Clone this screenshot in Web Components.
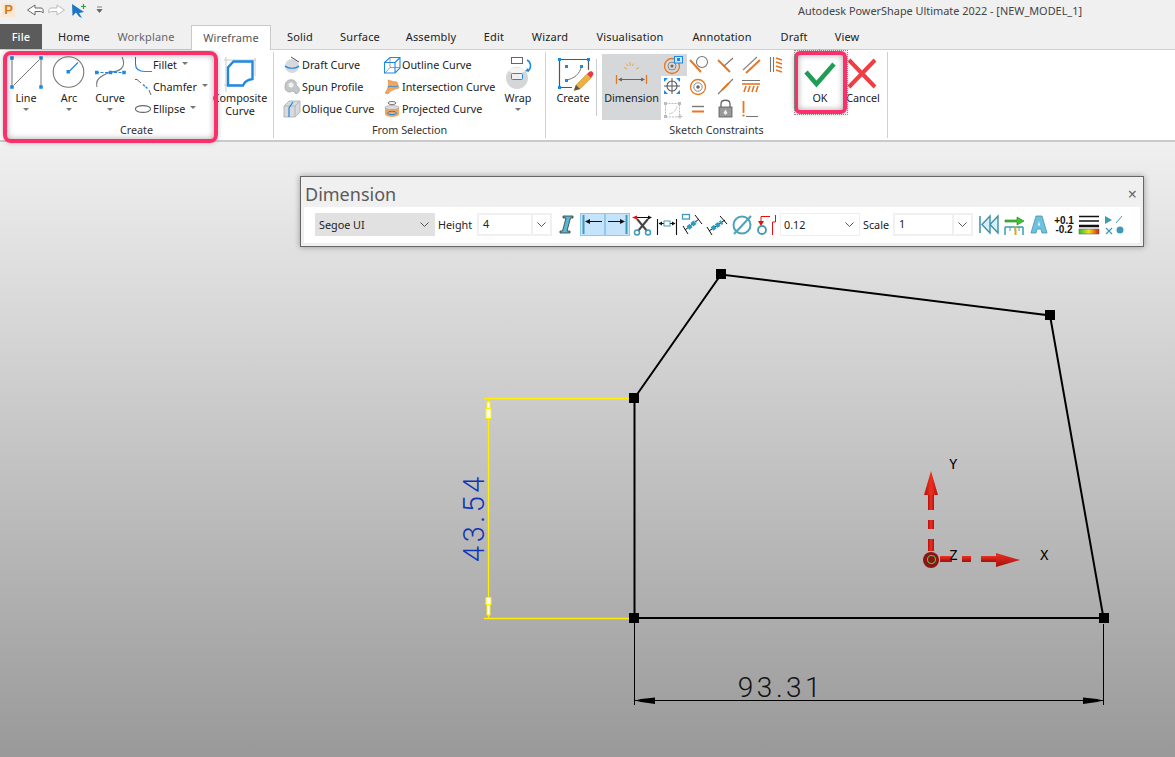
<!DOCTYPE html>
<html>
<head>
<meta charset="utf-8">
<title>PowerShape</title>
<style>
  html, body { margin: 0; padding: 0; overflow: hidden; }
  body { font-family: "Noto Sans", "Open Sans", sans-serif; font-size: 10.8px; color: #222; }
  svg { display: block; overflow: visible; }
</style>
</head>
<body>

<ps-app>
  <ps-titlebar title-text="Autodesk PowerShape Ultimate 2022 - [NEW_MODEL_1]"></ps-titlebar>
  <ps-tabs></ps-tabs>

  <ps-ribbon>
    <rb-group label="Create" width="274" pad="6">
      <rb-big label="Line" width="40" caret>
        <svg width="40" height="37" viewBox="6 54 40 37" fill="none">
          <path d="M12 58V87M41 58V87" stroke="#777" stroke-width="1"/>
          <path d="M14 85L39 60" stroke="#777" stroke-width="1"/>
          <path d="M10.250 56.250h3.500v3.500h-3.500zM39.250 56.250h3.500v3.500h-3.500zM10.250 85.250h3.500v3.500h-3.500zM39.250 85.250h3.500v3.500h-3.500z" fill="#1e88e5"/>
        </svg>
      </rb-big>
      <rb-big label="Arc" width="40" caret style="margin-left:3px">
        <svg width="40" height="37" viewBox="49 54 40 37" fill="none">
          <circle cx="68.500" cy="72" r="15.300" stroke="#777" stroke-width="1.100"/>
          <path d="M69 71.500L78 62.500" stroke="#1e88e5" stroke-width="1.200"/>
          <rect x="66.500" y="70" width="3.500" height="3.500" fill="#1e88e5"/>
        </svg>
      </rb-big>
      <rb-big label="Curve" width="40" caret style="margin-left:1px">
        <svg width="40" height="37" viewBox="90 54 40 37" fill="none">
          <path d="M97 87C95 79 101 76 110 72C120 72 127 67 122 57" stroke="#777" stroke-width="1.100"/>
          <path d="M96 72.500H124" stroke="#1e88e5" stroke-width="1" stroke-dasharray="3 1.500"/>
          <path d="M95 70.750h3.500v3.500h-3.500zM108.750 70.750h3.500v3.500h-3.500zM122.250 70.750h3.500v3.500h-3.500z" fill="#1e88e5"/>
        </svg>
      </rb-big>
      <rb-small-col width="79" style="margin-left:3px">
        <rb-small label="Fillet" caret>
          <svg width="18" height="18" viewBox="134 56 18 18" fill="none">
            <path d="M135.500 57V64" stroke="#666"/>
            <path d="M135.500 64C135.500 69 139 71.500 145 71.500" stroke="#1e88e5" stroke-width="1.200"/>
            <path d="M145 71.500H152" stroke="#777"/>
          </svg>
        </rb-small>
        <rb-small label="Chamfer" caret>
          <svg width="18" height="18" viewBox="134 78 18 18" fill="none">
            <path d="M135 79.500H137L141 83" stroke="#666"/>
            <path d="M143 84.500L148 89" stroke="#1e88e5" stroke-width="1.400" stroke-dasharray="2.500 1"/>
            <path d="M149 90L151 95" stroke="#666"/>
          </svg>
        </rb-small>
        <rb-small label="Ellipse" caret>
          <svg width="18" height="18" viewBox="134 100 18 18" fill="none">
            <ellipse cx="143" cy="109" rx="7.600" ry="3.400" stroke="#666" stroke-width="1.100"/>
          </svg>
        </rb-small>
      </rb-small-col>
      <rb-big label="Composite Curve" width="56">
        <svg width="56" height="37" viewBox="212 54 56 37" fill="none">
          <path d="M226 57V92M224 60H256M255 58V76M224 85H240" stroke="#ccc" stroke-width="1"/>
          <path d="M233.500 61.500H252.500V79C247 80 244 82 243 85.500H228V67.500Z" stroke="#1e88e5" stroke-width="2.400"/>
        </svg>
      </rb-big>
    </rb-group>

    <rb-group label="From Selection" width="272" pad="8">
      <rb-small-col width="100">
        <rb-small label="Draft Curve">
          <svg width="18" height="18" viewBox="282 56 18 18" fill="none">
            <circle cx="291" cy="66" r="7" fill="#d6d9db"/>
            <path d="M290 57L298 62" stroke="#555"/>
            <path d="M284 66C287 69 295 69 298 66" stroke="#1e88e5" stroke-width="1.200"/>
          </svg>
        </rb-small>
        <rb-small label="Spun Profile">
          <svg width="18" height="18" viewBox="282 78 18 18" fill="none">
            <path d="M284 87C284 81 288 79 292 80C295 81 296 84 295 85L298 88C299 90 298 93 295 94L292 91C288 93 284 92 284 87Z" fill="#c3c7ca" stroke="#a5a9ac" stroke-width=".8"/>
            <circle cx="290" cy="85" r="2.500" fill="#f2f2f2"/>
          </svg>
        </rb-small>
        <rb-small label="Oblique Curve">
          <svg width="18" height="18" viewBox="282 100 18 18" fill="none">
            <path d="M283 106L288 101H299V112L294 117H283Z" fill="#d8dadc" stroke="#a8abae" stroke-width=".8"/>
            <path d="M283 106H294V117M294 106L299 101" stroke="#a8abae" stroke-width=".8"/>
            <path d="M288 117V108L292 102" stroke="#1e88e5" stroke-width="1.200"/>
          </svg>
        </rb-small>
      </rb-small-col>
      <rb-small-col width="116">
        <rb-small label="Outline Curve">
          <svg width="18" height="18" viewBox="382 56 18 18" fill="none">
            <path d="M383.500 62.500L389 57.500H399V68L394 73H383.500ZM383.500 62.500H394V73M394 62.500L399 57.500" stroke="#1e88e5" stroke-width="1.100"/>
            <path d="M389 57.500V67.500H399M389 67.500L384 73" stroke="#777" stroke-width=".7"/>
          </svg>
        </rb-small>
        <rb-small label="Intersection Curve">
          <svg width="18" height="18" viewBox="382 78 18 18" fill="none">
            <path d="M387 80C391 81 393 82 396 82L398 88C394 89 390 90 387 94L384 93C387 89 388 85 387 80Z" fill="#f0a560" stroke="#d98a42" stroke-width=".6"/>
            <path d="M387 87C390 85 393 88 397 86" stroke="#1e88e5" stroke-width=".9"/>
          </svg>
        </rb-small>
        <rb-small label="Projected Curve">
          <svg width="18" height="18" viewBox="382 100 18 18" fill="none">
            <ellipse cx="391" cy="103" rx="4" ry="1.500" stroke="#666" stroke-width=".9"/>
            <path d="M384 107.500V114C384 118 398 118 398 114V107.500Z" fill="#f0a560"/>
            <ellipse cx="391" cy="107.500" rx="7" ry="2" fill="#ddd" stroke="#999" stroke-width=".6"/>
            <ellipse cx="391" cy="113" rx="4.500" ry="1.700" stroke="#1e88e5" stroke-width="1"/>
          </svg>
        </rb-small>
      </rb-small-col>
      <rb-big label="Wrap" width="40" caret>
        <svg width="40" height="37" viewBox="498 54 40 37" fill="none">
          <rect x="511.500" y="57.500" width="11" height="6" stroke="#666"/>
          <circle cx="517" cy="78" r="11" fill="#d4d6d8"/>
          <ellipse cx="517" cy="70.500" rx="8" ry="3" fill="#f5f5f5"/>
          <rect x="511.500" y="73.500" width="11" height="6" rx="1" fill="#eee" stroke="#1e88e5"/>
          <path d="M527 60C531 62 532 68 528 71" stroke="#1e88e5" stroke-width="1.500"/>
          <path d="M529 72L525 71L528 68Z" fill="#1e88e5"/>
        </svg>
      </rb-big>
    </rb-group>

    <rb-group label="Sketch Constraints" width="342" pad="7">
      <rb-big label="Create" width="40">
        <svg width="40" height="37" viewBox="553 54 40 37" fill="none">
          <path d="M559.500 59.500H588.500V70M559.500 59.500V87.500H572" stroke="#555" stroke-width="1.200"/>
          <path d="M566 80C574 79 580 74 581.500 66" stroke="#777"/>
          <path d="M558 58h3v3h-3zM587 58h3v3h-3zM558 86h3v3h-3zM565 65h3v3h-3zM565 79h3v3h-3zM580 65h3v3h-3z" fill="#1e88e5"/>
          <path d="M576 85L587 74L591 78L580 89L574 90.500Z" fill="#f0b040" stroke="#b8862c" stroke-width=".5"/>
          <path d="M587 74L589 72C590 71 592 71 593 72.500C594 74 593 75 592.500 76L591 78Z" fill="#e83b3b"/>
          <path d="M576 85L580 89L574 90.500Z" fill="#555"/>
        </svg>
      </rb-big>
      <rb-vsep></rb-vsep>
      <rb-big label="Dimension" width="59" active>
        <svg width="59" height="37" viewBox="602 54 59 37" fill="none">
          <path d="M624 67.500L627 69M636 69L639 67.500M630 66V62M626 63.500L628 66M634 63.500L632 66" stroke="#eba33f" stroke-width="1"/>
          <path d="M616.500 75V84M646.500 75V84" stroke="#e87722" stroke-width="1.300"/>
          <path d="M619 79.500H644" stroke="#666"/>
          <path d="M618 79.500L622 77.500V81.500ZM645 79.500L641 77.500V81.500Z" fill="#666"/>
        </svg>
      </rb-big>
      <rb-icon-grid>
        <svg width="26" height="22" viewBox="661 54 26 22" fill="none" style="background:#d6d7d9">
          <circle cx="672" cy="66" r="7.500" stroke="#e87722" stroke-width="1.300"/>
          <circle cx="672" cy="66" r="4" stroke="#8a8a8a"/>
          <circle cx="672" cy="66" r="1.500" fill="#666"/>
          <rect x="674.500" y="56.500" width="8" height="6.500" fill="#cfe4f7" stroke="#1e88e5"/>
          <rect x="677" y="58" width="3" height="3" fill="#1e88e5"/>
        </svg>
        <svg width="25" height="22" viewBox="687 54 25 22" fill="none">
          <circle cx="702" cy="62" r="5.500" stroke="#777" stroke-width="1.100"/>
          <path d="M690 60L701 72" stroke="#e87722" stroke-width="2"/>
        </svg>
        <svg width="27" height="22" viewBox="712 54 27 22" fill="none">
          <path d="M718 60L730 72" stroke="#e87722" stroke-width="2"/>
          <path d="M724 66L733 58" stroke="#777" stroke-width="1.200"/>
        </svg>
        <svg width="25" height="22" viewBox="739 54 25 22" fill="none">
          <path d="M743 70L757 57" stroke="#888" stroke-width="1.200"/>
          <path d="M746 73L760 60" stroke="#e87722" stroke-width="2"/>
        </svg>
        <svg width="25" height="22" viewBox="764 54 25 22" fill="none">
          <path d="M770.500 57V72M773.500 57V72" stroke="#777" stroke-width="1.100"/>
          <path d="M776 58L782 60M776 62L782 64M776 66L782 68M776 70L782 72" stroke="#e87722" stroke-width="1.600"/>
        </svg>

        <svg width="26" height="22" viewBox="661 76 26 22" fill="none">
          <circle cx="672" cy="86" r="5" stroke="#555" stroke-width="1.100"/>
          <path d="M664 86H680M672 78V94" stroke="#555"/>
          <path d="M664 78h4l-4 4zM680 78h-4l4 4zM664 94h4l-4-4zM680 94h-4l4-4z" fill="#1e88e5"/>
        </svg>
        <svg width="25" height="22" viewBox="687 76 25 22" fill="none">
          <circle cx="698" cy="87" r="7.500" stroke="#e87722" stroke-width="1.300"/>
          <circle cx="698" cy="87" r="4.200" stroke="#8a8a8a"/>
          <circle cx="698" cy="87" r="1.800" fill="#666"/>
        </svg>
        <svg width="27" height="22" viewBox="712 76 27 22" fill="none">
          <path d="M718 94L733 79" stroke="#777" stroke-width="1.100"/>
          <path d="M722 90L729 83" stroke="#e87722" stroke-width="2"/>
        </svg>
        <svg width="25" height="22" viewBox="739 76 25 22" fill="none">
          <path d="M742 80.500H760" stroke="#777"/>
          <path d="M742 84H760" stroke="#e87722" stroke-width="1.600"/>
          <path d="M744 92L746 86M748 92L750 86M752 92L754 86M756 92L758 86" stroke="#e87722" stroke-width="1.600"/>
        </svg>
        <span></span>

        <svg width="26" height="22" viewBox="661 98 26 22" fill="none">
          <path d="M665.500 103.500H679.500V117H665.500Z" stroke="#bbb" stroke-dasharray="2 1"/>
          <path d="M669 114C674 113 676 110 677 106" stroke="#ccc"/>
          <path d="M664 102h3v3h-3zM678 102h3v3h-3zM664 115h3v3h-3z" fill="#bbb"/>
          <path d="M680 114V119M677.500 116.500H682.500" stroke="#bbb"/>
        </svg>
        <svg width="25" height="22" viewBox="687 98 25 22" fill="none">
          <path d="M692 106.500H704" stroke="#777" stroke-width="1.400"/>
          <path d="M692 111.500H704" stroke="#e87722" stroke-width="2"/>
        </svg>
        <svg width="27" height="22" viewBox="712 98 27 22" fill="none">
          <path d="M721 107V104C721 99 730 99 730 104V107" stroke="#666" stroke-width="1.300"/>
          <rect x="719" y="107" width="13" height="10" fill="#999" stroke="#555" stroke-width=".8"/>
          <path d="M725.500 109.500L723.500 113L725.500 115L727.500 113Z" fill="#eee"/>
        </svg>
        <svg width="25" height="22" viewBox="739 98 25 22" fill="none">
          <path d="M743.500 101V113" stroke="#e87722" stroke-width="1.800"/>
          <rect x="742.500" y="114.500" width="2" height="2" fill="#e87722"/>
          <path d="M746 116.500H758" stroke="#777" stroke-width="1.100"/>
        </svg>
        <span></span>
      </rb-icon-grid>
      <rb-big label="OK" width="46" style="margin-left:8px">
        <svg width="46" height="37" viewBox="797 54 46 37" fill="none">
          <path d="M806 72L816.500 84L834 64" stroke="#1f9d55" stroke-width="4.500"/>
        </svg>
      </rb-big>
      <rb-big label="Cancel" width="40">
        <svg width="40" height="37" viewBox="843 54 40 37" fill="none">
          <path d="M849 60L875 87M875 60L849 87" stroke="#ee3f45" stroke-width="4"/>
        </svg>
      </rb-big>
    </rb-group>
  </ps-ribbon>

  <ps-viewport>
    <ps-dialog heading="Dimension">
      <dim-combo value="Segoe UI" width="120" filled style="margin-left:11px"></dim-combo>
      <dim-label text="Height" width="39" style="margin-left:3px"></dim-label>
      <dim-input value="4" width="75"></dim-input>
      <svg width="20" height="23" viewBox="557 213 20 23" fill="none" style="margin-left:5px">
        <path d="M563 216H573V218H570.500L567 231H570V233H560V231H562.500L566 218H563Z" fill="#56b8d2" stroke="#333" stroke-width=".8"/>
      </svg>
      <dim-toggle style="margin-left:3px">
        <svg width="23" height="21" viewBox="581 214 23 21" fill="none">
          <path d="M583.500 215V234" stroke="#3f9bb5" stroke-width="2"/>
          <path d="M587 221.500H602" stroke="#111"/>
          <path d="M585 221.500L590 219V224Z" fill="#111"/>
        </svg>
      </dim-toggle>
      <dim-toggle>
        <svg width="23" height="21" viewBox="606 214 23 21" fill="none">
          <path d="M626.500 215V234" stroke="#3f9bb5" stroke-width="2"/>
          <path d="M608 221.500H623" stroke="#111"/>
          <path d="M625 221.500L620 219V224Z" fill="#111"/>
        </svg>
      </dim-toggle>
      <svg width="24" height="23" viewBox="631 213 24 23" fill="none" style="margin-left:1px">
        <path d="M633 217.500H651" stroke="#111"/>
        <path d="M632 217.500L637 215.500V219.500Z" fill="#e01010"/>
        <path d="M652 217.500L648 215.500V219.500Z" fill="#111"/>
        <path d="M637 219L647 231M648 219L638 231" stroke="#444" stroke-width="2"/>
        <circle cx="637" cy="232.500" r="2.500" stroke="#3f9bb5" stroke-width="1.500"/>
        <circle cx="648" cy="232.500" r="2.500" stroke="#3f9bb5" stroke-width="1.500"/>
      </svg>
      <svg width="22" height="23" viewBox="656 213 22 23" fill="none" style="margin-left:1px">
        <path d="M657.500 219V235M676.500 219V235" stroke="#111" stroke-width="1.100"/>
        <path d="M659 223.500H675" stroke="#111"/>
        <path d="M658.500 223.500L662 221.500V225.500ZM675.500 223.500L672 221.500V225.500Z" fill="#111"/>
        <rect x="664" y="221" width="6" height="5" fill="#fff" stroke="#3f9bb5"/>
      </svg>
      <svg width="23" height="23" viewBox="681 213 23 23" fill="none" style="margin-left:3px">
        <path d="M683 226L688 234M695 215L702 224" stroke="#111"/>
        <path d="M685 230L699 219" stroke="#111"/>
        <rect x="682.500" y="214.500" width="7" height="4.500" fill="#fff" stroke="#3f9bb5" stroke-width="1.300"/>
        <path d="M688 228L696 221.500" stroke="#2a9cc0" stroke-width="4.500" stroke-dasharray="4 1"/>
      </svg>
      <svg width="24" height="23" viewBox="705 213 24 23" fill="none" style="margin-left:1px">
        <path d="M707 227L712 235M720 216L727 224" stroke="#111"/>
        <path d="M709 231L725 220" stroke="#111"/>
        <path d="M712 229L722 222" stroke="#2a9cc0" stroke-width="4.500" stroke-dasharray="4 1"/>
      </svg>
      <svg width="22" height="23" viewBox="731 213 22 23" fill="none" style="margin-left:2px">
        <circle cx="742" cy="225" r="8.500" stroke="#4da3bb" stroke-width="2"/>
        <path d="M734 234L751 216" stroke="#4da3bb" stroke-width="2"/>
      </svg>
      <svg width="23" height="23" viewBox="755 213 23 23" fill="none" style="margin-left:2px">
        <path d="M761 223V216.500H770" stroke="#e01010"/>
        <path d="M761 226L758 221H764Z" fill="#e01010"/>
        <path d="M775.500 215V222H772.500V235" stroke="#e01010"/>
        <circle cx="762" cy="230" r="4" stroke="#3f9bb5" stroke-width="1.800"/>
      </svg>
      <dim-combo value="0.12" width="80" style="margin-left:2px"></dim-combo>
      <dim-label text="Scale" width="30" style="margin-left:3px"></dim-label>
      <dim-input value="1" width="80"></dim-input>
      <svg width="24" height="23" viewBox="977 213 24 23" fill="none" style="margin-left:4px">
        <path d="M980 216V233" stroke="#3b8fa8" stroke-width="1.500"/>
        <path d="M990 216L982 224.500L990 233ZM998 216L990 224.500L998 233Z" fill="#d6eef5" stroke="#3b8fa8" stroke-width="1.400"/>
      </svg>
      <svg width="24" height="23" viewBox="1002 213 24 23" fill="none" style="margin-left:1px">
        <path d="M1005 227H1023M1005 227V235M1023 227V235" stroke="#3b9bb5" stroke-width="1.500"/>
        <path d="M1010 227V231M1015 227V231M1019 227V231" stroke="#3b9bb5"/>
        <path d="M1015.500 226V235" stroke="#e0a820" stroke-width="2"/>
        <path d="M1005 220H1017V217L1024 221L1017 225V222H1005Z" fill="#3fc62e" stroke="#1f7a14" stroke-width=".6"/>
      </svg>
      <svg width="20" height="23" viewBox="1029 213 20 23" fill="none" style="margin-left:3px">
        <path d="M1036 216H1042L1047 233H1042L1041 229H1037L1036 233H1031Z" fill="#6cc3e0" stroke="#4a90aa" stroke-width=".8"/>
        <path d="M1038 225.500H1040L1039 221Z" fill="#fff"/>
      </svg>
      <dim-tol style="margin-left:3px"></dim-tol>
      <svg width="23" height="23" viewBox="1078 213 23 23" fill="none" style="margin-left:2px">
        <path d="M1079 216.500H1099M1079 221H1099" stroke="#111" stroke-width="1.500"/>
        <path d="M1079 226H1099" stroke="#111" stroke-width="2.500"/>
        <defs><linearGradient id="heat"><stop offset="0" stop-color="#30c030"/><stop offset=".5" stop-color="#f0e020"/><stop offset="1" stop-color="#e02010"/></linearGradient></defs>
        <rect x="1079" y="229" width="20" height="5" fill="url(#heat)" stroke="#555" stroke-width=".5"/>
      </svg>
      <svg width="22" height="23" viewBox="1103 213 22 23" fill="none" style="margin-left:2px">
        <path d="M1105 216L1112 220L1105 224Z" fill="#3f9bb5"/>
        <path d="M1116 223L1122 216" stroke="#3f9bb5"/>
        <path d="M1106 228L1112 234M1112 228L1106 234" stroke="#3f9bb5" stroke-width="1.200"/>
        <circle cx="1120" cy="230" r="3.500" fill="#3f9bb5"/>
      </svg>
    </ps-dialog>
  </ps-viewport>

  <ps-mark left="3" top="51" width="215" height="92" radius="8"></ps-mark>
  <ps-mark left="794" top="51" width="53" height="63" radius="6" dotted></ps-mark>
</ps-app>

<script>
// Pequeno ayudante: crea el shadow root abierto y mete el html
function shadow(el, html) {
  const root = el.attachShadow({ mode: "open" });
  const template = document.createElement("template");
  template.innerHTML = html;
  root.appendChild(template.content.cloneNode(true));
  return root;
}

const TABS = [
  ["Home", 74, "#222"], ["Workplane", 146, "#666"], ["Wireframe", 231, "#555"], ["Solid", 300, "#222"],
  ["Surface", 360, "#222"], ["Assembly", 431, "#222"], ["Edit", 494, "#222"], ["Wizard", 550, "#222"],
  ["Visualisation", 630, "#222"], ["Annotation", 722, "#222"], ["Draft", 794, "#222"], ["View", 847, "#222"],
];

class PsApp extends HTMLElement {
  connectedCallback() {
    shadow(this, `<style>
      :host { display: flex; flex-direction: column; position: relative; width: 1175px; height: 757px; overflow: hidden; background: #f0f0f0; }
    </style><slot></slot>`);
  }
}

class PsTitlebar extends HTMLElement {
  connectedCallback() {
    shadow(this, `<style>
      :host { display: flex; align-items: center; height: 24px; flex: none; background: #f0f0f0; }
      .quick { display: flex; align-items: center; width: 798px; height: 24px; }
      .logo { width: 13px; height: 14px; margin: 0 0 4px 2px; background: #fbe7d2; color: #d87a1c; font: bold 13px/14px "Liberation Sans", sans-serif; text-align: center; }
      .title { font-size: 10.9px; color: #444; margin-top: -3px; white-space: nowrap; }
      svg { display: block; overflow: visible; }
    </style>
    <div class="quick">
      <div class="logo">P</div>
      <svg width="70" height="18" viewBox="26 0 70 18" fill="none" style="margin:0 0 4px 11px">
        <path d="M27.500 9L35 4V7H41C43 7 43.500 9 43 12C42 10.500 41 10.500 39 10.500H35V14Z" stroke="#666" fill="#fff"/>
        <path d="M64.500 9L57 4V7H51C49 7 48.500 9 49 12C50 10.500 51 10.500 53 10.500H57V14Z" stroke="#bbb" fill="#fff"/>
        <path d="M72 3L84 11L79 12L82 17L79 15.500L76 11.500L72.500 15Z" fill="#1976c8"/>
        <path d="M83.500 3V8M81 5.500H86" stroke="#2aa040" stroke-width="1.200"/>
      </svg>
      <svg width="8" height="8" viewBox="0 0 8 8" style="margin:0 0 4px 0">
        <path d="M1 1H6M1 3.500L3.500 6.500L6 3.500Z" fill="#666" stroke="#666" stroke-width=".8"/>
      </svg>
    </div>
    <div class="title">${this.getAttribute("title-text")}</div>`);
  }
}

class PsTabs extends HTMLElement {
  connectedCallback() {
    // cada pestana va centrada en su columna; los anchos salen de los centros
    let x = 42;
    let cells = "";
    TABS.forEach(([name, center, color], i) => {
      const next = TABS[i + 1] ? TABS[i + 1][1] : center + 40;
      const right = name === "Wireframe" ? 271 : name === "Workplane" ? 191 : name === "Solid" ? 330 : (center + next) / 2;
      const left = x;
      const w = right - left;
      const pad = (center - left) * 2 - w;
      cells += `<div class="tab ${name === "Wireframe" ? "on" : ""}" style="width:${w}px;color:${color};padding-left:${Math.max(pad, 0)}px;padding-right:${Math.max(-pad, 0)}px">${name}</div>`;
      x = right;
    });
    shadow(this, `<style>
      :host { display: flex; height: 25px; flex: none; background: #f0f0f0; font-size: 11px; letter-spacing: .15px; position: relative; z-index: 1; }
      .file { width: 42px; height: 25px; background: #5b5b5b; color: #fff; font-weight: 500; text-align: center; line-height: 25px; }
      .tab { box-sizing: border-box; height: 25px; line-height: 26px; text-align: center; white-space: nowrap; }
      .on { margin-top: 1px; line-height: 24px; background: #fff; border: 1px solid #c9c9c9; border-bottom: none; }
    </style><div class="file">File</div>${cells}`);
  }
}

class PsRibbon extends HTMLElement {
  connectedCallback() {
    shadow(this, `<style>
      :host { display: flex; height: 93px; flex: none; box-sizing: border-box; background: #fff; border-top: 1px solid #d0d0d0; border-bottom: 2px solid #cacaca; padding: 2px 0 0; }
    </style><slot></slot>`);
  }
}

class RbGroup extends HTMLElement {
  connectedCallback() {
    shadow(this, `<style>
      :host { display: flex; flex-direction: column; box-sizing: border-box; height: 86px; padding-top: 2px; border-right: 1px solid #d0d0d0; flex: none;
        width: ${this.getAttribute("width")}px; }
      .body { display: flex; height: 69px; padding-left: ${this.getAttribute("pad")}px; }
      .label { height: 14px; line-height: 14px; text-align: center; color: #333; }
    </style><div class="body"><slot></slot></div><div class="label">${this.getAttribute("label")}</div>`);
  }
}

class RbBig extends HTMLElement {
  connectedCallback() {
    const words = this.getAttribute("label");
    const active = this.hasAttribute("active");
    shadow(this, `<style>
      :host { display: flex; flex-direction: column; align-items: center; flex: none; height: 66px; box-sizing: border-box;
        width: ${this.getAttribute("width")}px; ${active ? "background:#d6d7d9;" : ""} }
      .icon { height: 37px; flex: none; }
      .label { width: 100%; text-align: center; line-height: 13px; color: #222; }
      .caret { width: 0; height: 0; border: 3px solid transparent; border-top-color: #777; border-bottom: 0; margin-top: 4px; }
    </style><div class="icon"><slot></slot></div><div class="label">${words}</div>${this.hasAttribute("caret") ? '<div class="caret"></div>' : ""}`);
  }
}

class RbSmallCol extends HTMLElement {
  connectedCallback() {
    shadow(this, `<style>
      :host { display: flex; flex-direction: column; flex: none; width: ${this.getAttribute("width")}px; }
    </style><slot></slot>`);
  }
}

class RbSmall extends HTMLElement {
  connectedCallback() {
    shadow(this, `<style>
      :host { display: flex; align-items: center; height: 22px; flex: none; padding-left: 1px; }
      .label { margin: 0 0 2px 1px; white-space: nowrap; }
      .caret { width: 0; height: 0; border: 3px solid transparent; border-top-color: #777; border-bottom: 0; margin: 0 0 3px 5px; }
    </style><slot></slot><span class="label">${this.getAttribute("label")}</span>${this.hasAttribute("caret") ? '<span class="caret"></span>' : ""}`);
  }
}

class RbVsep extends HTMLElement {
  connectedCallback() {
    shadow(this, `<style>
      :host { display: block; width: 1px; height: 57px; margin: 5px 5px 0 3px; background: #ccc; flex: none; }
    </style>`);
  }
}

class RbIconGrid extends HTMLElement {
  connectedCallback() {
    shadow(this, `<style>
      :host { display: grid; grid-template-columns: 26px 25px 27px 25px 25px; grid-auto-rows: 22px; flex: none; height: 66px; }
    </style><slot></slot>`);
  }
}

class PsViewport extends HTMLElement {
  connectedCallback() {
    const handle = ([x, y]) => `<rect x="${x - 5}" y="${y - 5}" width="10" height="10" fill="#000"/>`;
    shadow(this, `<style>
      :host { display: block; position: relative; flex: 1; background: linear-gradient(#f0f0f0, #999999); }
      svg { display: block; position: absolute; left: 0; top: 0; }
      .dim { font-family: Roboto, "Liberation Sans", sans-serif; font-weight: 300; }
      .axis { font: 14px "DejaVu Sans Mono", monospace; }
    </style>
    <svg width="1175" height="615" viewBox="0 142 1175 615" fill="none">
      <defs>
        <linearGradient id="vshaft"><stop offset="0" stop-color="#b01010"/><stop offset=".5" stop-color="#f03020"/><stop offset="1" stop-color="#b01010"/></linearGradient>
        <linearGradient id="hshaft" x2="0" y2="1"><stop offset="0" stop-color="#f03020"/><stop offset="1" stop-color="#a01010"/></linearGradient>
      </defs>

      <!-- cota 43.54 en amarillo -->
      <path d="M484 398.500H634M484 618.500H634M488.500 398V618" stroke="#ffee00" stroke-width="1.300"/>
      <rect x="487" y="402" width="3" height="8" fill="#fff" stroke="#ffee00"/>
      <rect x="486" y="408.500" width="5" height="10" fill="#fff" stroke="#ffee00"/>
      <rect x="487" y="603" width="3" height="12" fill="#fff" stroke="#ffee00"/>
      <rect x="486" y="597.500" width="5" height="7" fill="#fff" stroke="#ffee00"/>
      <text class="dim" transform="translate(484,517.500) rotate(-90)" text-anchor="middle" font-size="29" letter-spacing="3.500" fill="#0f35b5">43.54</text>

      <!-- perfil del boceto -->
      <path d="M634.500 398L721 274.500L1050 315.500L1103.500 618H634.500Z" stroke="#000" stroke-width="2"/>
      ${[[634, 398], [721, 274], [1050, 315], [1104, 618], [634, 618]].map(handle).join("")}

      <!-- cota 93.31 -->
      <path d="M634.500 618V705M1103.500 624V705M635 700.500H1103" stroke="#000" stroke-width="1"/>
      <path d="M635 700.500L641 699L655 697.500V704L641 702Z M1103 700.500L1097 699L1083 697.500V704L1097 702Z" fill="#000"/>
      <text class="dim" x="781" y="697" text-anchor="middle" font-size="28" letter-spacing="3.500" fill="#111">93.31</text>

      <!-- ejes -->
      <path d="M931 471L938 495H924Z" fill="url(#vshaft)"/>
      <path d="M928 495h6v15h-6zM928 520h6v9h-6zM928 539h6v12h-6z" fill="url(#vshaft)"/>
      <path d="M940 556h12v6h-12zM962 556h9v6h-9zM981 556h15v6h-15z" fill="url(#hshaft)"/>
      <path d="M996 553L1020 560L996 567Z" fill="url(#hshaft)"/>
      <circle cx="931" cy="560" r="8" fill="#8c1414"/>
      <circle cx="931.500" cy="559.500" r="4" stroke="#46d246" stroke-width="1.100"/>
      <text class="axis" x="949" y="469" fill="#000">Y</text>
      <text class="axis" x="949" y="560" fill="#000">Z</text>
      <text class="axis" x="1040" y="560" fill="#000">X</text>
    </svg>
    <slot></slot>`);
  }
}

class PsDialog extends HTMLElement {
  connectedCallback() {
    shadow(this, `<style>
      :host { display: flex; flex-direction: column; position: absolute; left: 300px; top: 34px; width: 844px; height: 71px; box-sizing: border-box;
        background: #f0f0f0; border: 1px solid #666; box-shadow: 0 0 6px rgba(0,0,0,.35); }
      .head { display: flex; justify-content: space-between; align-items: center; height: 30px; flex: none; padding: 3px 6px 0 4px; box-sizing: border-box; }
      .title { font-size: 18px; line-height: 24px; color: #5a5a5a; }
      .close { font-size: 16px; color: #666; }
      .bar { display: flex; align-items: center; margin: 0 3px; height: 36px; box-sizing: border-box; padding-bottom: 1px; background: #fff; }
    </style>
    <div class="head"><span class="title">${this.getAttribute("heading")}</span><span class="close">×</span></div>
    <div class="bar"><slot></slot></div>`);
  }
}

const CHEVRON = `<svg width="9" height="5" viewBox="0 0 9 5" fill="none" style="display:block"><path d="M.5 .5L4.500 4.500L8.500 .5" stroke="#555"/></svg>`;

class DimCombo extends HTMLElement {
  connectedCallback() {
    const filled = this.hasAttribute("filled");
    shadow(this, `<style>
      :host { display: flex; align-items: center; justify-content: space-between; box-sizing: border-box; height: 23px; flex: none; padding: 0 5px 0 3px;
        width: ${this.getAttribute("width")}px; background: ${filled ? "#e1e1e1" : "#fff"}; border: 1px solid ${filled ? "#e1e1e1" : "#eee"}; }
    </style><span>${this.getAttribute("value")}</span>${CHEVRON}`);
  }
}

class DimLabel extends HTMLElement {
  connectedCallback() {
    shadow(this, `<style>
      :host { display: block; flex: none; width: ${this.getAttribute("width")}px; white-space: nowrap; color: #222; }
    </style>${this.getAttribute("text")}`);
  }
}

class DimInput extends HTMLElement {
  connectedCallback() {
    shadow(this, `<style>
      :host { display: flex; box-sizing: border-box; height: 23px; flex: none; width: ${this.getAttribute("width")}px; border: 2px solid #f0f0f0; }
      .val { flex: 1; padding-left: 4px; line-height: 18px; }
      .drop { display: flex; align-items: center; justify-content: center; width: 17px; border-left: 2px solid #f0f0f0; }
    </style><div class="val">${this.getAttribute("value")}</div><div class="drop">${CHEVRON}</div>`);
  }
}

class DimToggle extends HTMLElement {
  connectedCallback() {
    shadow(this, `<style>
      :host { display: block; box-sizing: border-box; width: 25px; height: 23px; flex: none; background: #c5e3fb; border: 1px solid #90c8f0; }
    </style><slot></slot>`);
  }
}

class DimTol extends HTMLElement {
  connectedCallback() {
    shadow(this, `<style>
      :host { display: block; flex: none; width: 24px; font: bold 10px/9px "Liberation Sans", sans-serif; color: #111; text-align: center; }
    </style>+0.1<br>-0.2`);
  }
}

class PsMark extends HTMLElement {
  connectedCallback() {
    const [l, t, w, h, r] = ["left", "top", "width", "height", "radius"].map(a => this.getAttribute(a));
    const dots = this.hasAttribute("dotted")
      ? `:host::before { content: ""; position: absolute; inset: -5px -5px -5px -4px; border: 1px dotted #888; }
         :host::after { content: ""; position: absolute; left: 21px; top: -25px; height: 20px; border-left: 1px dashed #999; }`
      : "";
    shadow(this, `<style>
      :host { display: block; position: absolute; left: ${l}px; top: ${t}px; width: ${w}px; height: ${h}px; box-sizing: border-box;
        border: 4px solid #fb2f6c; border-radius: ${r}px; box-shadow: 0 0 5px rgba(0,0,0,.25), inset 0 0 6px rgba(0,0,0,.35); pointer-events: none; }
      ${dots}
    </style>`);
  }
}

customElements.define("ps-app", PsApp);
customElements.define("ps-titlebar", PsTitlebar);
customElements.define("ps-tabs", PsTabs);
customElements.define("ps-ribbon", PsRibbon);
customElements.define("rb-group", RbGroup);
customElements.define("rb-big", RbBig);
customElements.define("rb-small-col", RbSmallCol);
customElements.define("rb-small", RbSmall);
customElements.define("rb-vsep", RbVsep);
customElements.define("rb-icon-grid", RbIconGrid);
customElements.define("ps-viewport", PsViewport);
customElements.define("ps-dialog", PsDialog);
customElements.define("dim-combo", DimCombo);
customElements.define("dim-label", DimLabel);
customElements.define("dim-input", DimInput);
customElements.define("dim-toggle", DimToggle);
customElements.define("dim-tol", DimTol);
customElements.define("ps-mark", PsMark);
</script>
</body>
</html>
